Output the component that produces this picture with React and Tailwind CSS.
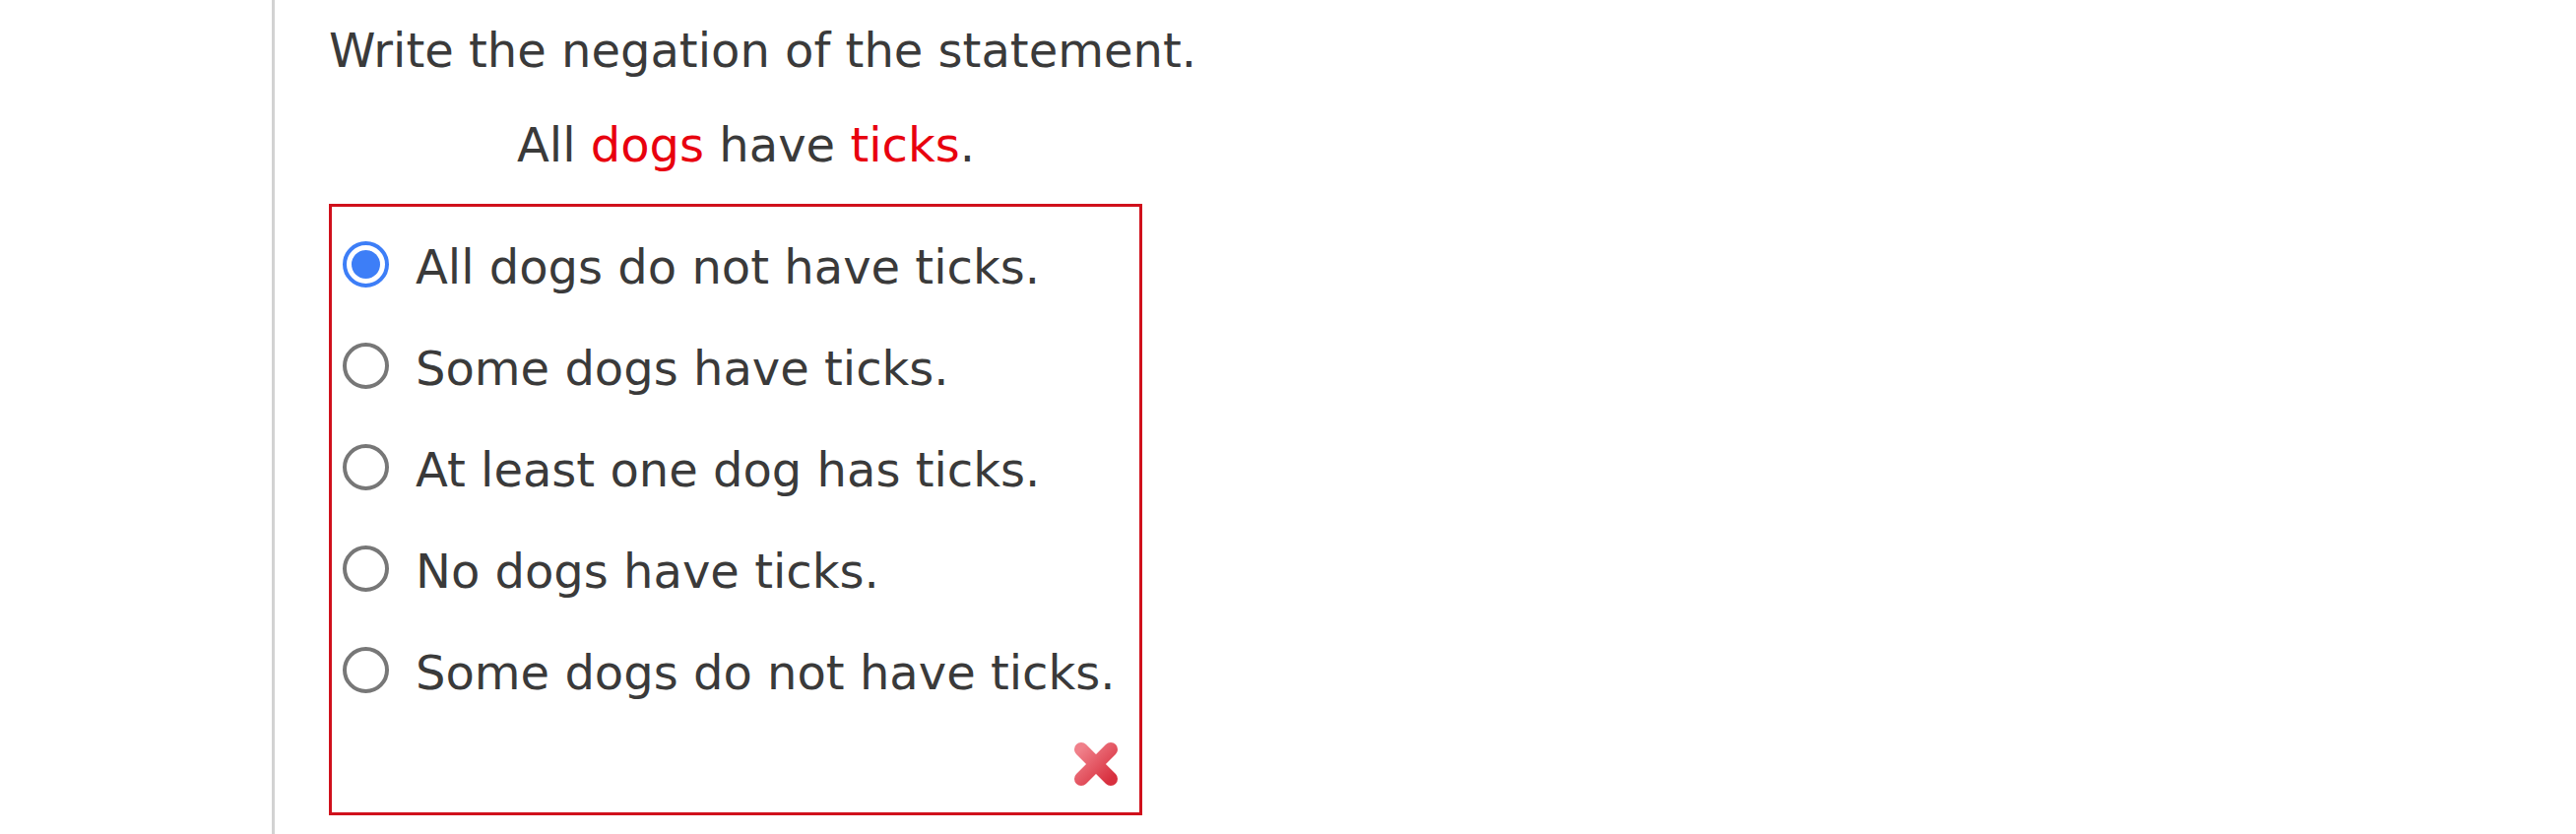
import React, { useState } from "react";

const options = [
  "All dogs do not have ticks.",
  "Some dogs have ticks.",
  "At least one dog has ticks.",
  "No dogs have ticks.",
  "Some dogs do not have ticks.",
];

function Radio({ checked }) {
  if (checked) {
    return (
      <span className="mt-[2px] flex h-[47px] w-[47px] shrink-0 items-center justify-center rounded-full border-[4px] border-[#3d7ef7] bg-white">
        <span className="h-[29px] w-[29px] rounded-full bg-[#3d7ef7]" />
      </span>
    );
  }
  return <span className="mt-[2px] h-[47px] w-[47px] shrink-0 rounded-full border-[4px] border-[#777777] bg-white" />;
}

function WrongMark() {
  return (
    <svg width="50" height="50" viewBox="0 0 50 50">
      <defs>
        <linearGradient id="xg" x1="0" y1="0" x2="1" y2="1">
          <stop offset="0" stopColor="#f0808a" />
          <stop offset="1" stopColor="#d8303f" />
        </linearGradient>
      </defs>
      <g stroke="url(#xg)" strokeWidth="14" strokeLinecap="round">
        <line x1="10" y1="10" x2="40" y2="40" />
        <line x1="40" y1="10" x2="10" y2="40" />
      </g>
    </svg>
  );
}

export default function App() {
  const [selected, setSelected] = useState(0);

  return (
    <div
      className="flex min-h-[847px] bg-white text-[48px] leading-[56px] text-[#3a3a3a]"
      style={{ fontFamily: '"DejaVu Sans", Verdana, sans-serif' }}
    >
      <div className="w-[276px] shrink-0" />
      <div className="border-l-[3px] border-[#d2d2d2] pl-[55px] pt-[23px]">
        {/* Question */}
        <p>Write the negation of the statement.</p>
        <p className="mt-[40px] pl-[191px]">
          All <span className="text-[#e8000e]">dogs</span> have{" "}
          <span className="text-[#e8000e]">ticks</span>.
        </p>

        {/* Answer choices */}
        <div className="mt-[32px] flex w-[826px] flex-col border-[3px] border-[#d0101c] pl-[11px] pt-[33px] pb-[24px] pr-[19px]">
          <div className="flex flex-col gap-[47px]">
            {options.map((opt, i) => (
              <label
                key={opt}
                className="flex cursor-pointer items-start gap-[27px]"
                onClick={() => setSelected(i)}
              >
                <Radio checked={selected === i} />
                <span>{opt}</span>
              </label>
            ))}
          </div>
          <div className="mt-[40px] flex justify-end">
            <WrongMark />
          </div>
        </div>
      </div>
    </div>
  );
}
